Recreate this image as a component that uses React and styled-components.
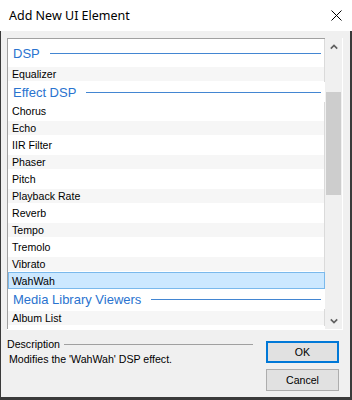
import React from "react";
import styled, { createGlobalStyle } from "styled-components";

const Global = createGlobalStyle`
  html, body { margin: 0; padding: 0; background: #ffffff; }
  * { box-sizing: border-box; }
`;

const UI_FONT = `"Liberation Sans", Arial, sans-serif`;

const Window = styled.div`
  width: 352px;
  height: 400px;
  display: flex;
  flex-direction: column;
  font-family: ${UI_FONT};
  color: #000;
  overflow: hidden;
`;

const TitleBar = styled.div`
  height: 31px;
  flex: none;
  background: #ffffff;
  display: flex;
  align-items: center;
  justify-content: space-between;
  padding: 0 10px 0 9px;
`;

const Title = styled.span`
  font-family: "Noto Sans", "Liberation Sans", sans-serif;
  font-size: 12.5px;
  line-height: 17px;
  color: #000;
`;

const CloseIcon = styled.svg`
  display: block;
  width: 11px;
  height: 11px;
`;

const Body = styled.div`
  flex: 1;
  background: #f0f0f0;
  border-left: 1px solid #3a3a3a;
  border-right: 2px solid #3a3a3a;
  border-bottom: 3px solid #3a3a3a;
  padding: 7px 7px 0 6px;
  display: flex;
  flex-direction: column;
`;

const ListBox = styled.div`
  height: 292px;
  flex: none;
  display: flex;
  border-right: 1px solid #ffffff;
  border-bottom: 1px solid #ffffff;
`;

const ListContent = styled.div`
  flex: 1;
  background: #ffffff;
  border-top: 1px solid #a0a0a0;
  border-left: 1px solid #a0a0a0;
  overflow: hidden;
`;

const Header = styled.div`
  height: ${(p) => (p.$first ? 26 : 20)}px;
  padding: ${(p) => (p.$first ? "3px" : "0")} 3px 0 5px;
  display: flex;
  align-items: center;
  gap: 10px;
  border-right: 1px solid ${(p) => (p.$first ? "#dadada" : "transparent")};
`;

const HeaderText = styled.span`
  font-size: 13px;
  line-height: 17px;
  color: #2a73cf;
  white-space: nowrap;
`;

const HeaderLine = styled.div`
  flex: 1;
  height: 1px;
  background: #4386d2;
`;

const Row = styled.div`
  height: 17px;
  padding: ${(p) => (p.$selected ? "1px 0 0 0" : "2px 0 1px 0")};
  border: ${(p) => (p.$selected ? "1px solid #7ab9ec" : "none")};
  border-right: 1px solid ${(p) => (p.$selected ? "#7ab9ec" : "#dadada")};
  background: ${(p) => (p.$selected ? "#cce8ff" : "#ffffff")};
`;

const RowBand = styled.div`
  height: 14px;
  padding-left: ${(p) => (p.$selected ? 3 : 4)}px;
  background: ${(p) => (p.$shaded ? "#f6f6f6" : "transparent")};
  font-size: 10.6px;
  line-height: 14px;
  white-space: nowrap;
`;

const Scrollbar = styled.div`
  width: 17px;
  flex: none;
  background: #f0f0f0;
  display: flex;
  flex-direction: column;
  padding: 0 1px;
`;

const ScrollButton = styled.div`
  height: 17px;
  flex: none;
  display: flex;
  align-items: center;
  justify-content: center;
`;

const Track = styled.div`
  flex: 1;
`;

const Thumb = styled.div`
  margin-top: 37px;
  height: 103px;
  background: #cdcdcd;
`;

const Footer = styled.div`
  display: flex;
  padding-top: 7px;
  gap: 13px;
`;

const DescColumn = styled.div`
  flex: 1;
  display: flex;
  flex-direction: column;
`;

const DescHeader = styled.div`
  height: 15px;
  display: flex;
  align-items: center;
  gap: 4px;
`;

const DescLabel = styled.span`
  font-size: 10.6px;
  line-height: 15px;
`;

const DescLine = styled.div`
  flex: 1;
  height: 1px;
  background: #a0a0a0;
`;

const DescText = styled.div`
  padding-left: 2px;
  font-size: 10.6px;
  line-height: 14px;
  white-space: nowrap;
`;

const ButtonColumn = styled.div`
  width: 73px;
  margin-top: 4px;
  margin-right: 4px;
  display: flex;
  flex-direction: column;
  gap: 6px;
`;

const Button = styled.div`
  height: 22px;
  background: #e1e1e1;
  border: ${(p) => (p.$default ? "2px solid #0078d7" : "1px solid #adadad")};
  display: flex;
  align-items: center;
  justify-content: center;
  font-size: 10.6px;
  line-height: 14px;
`;

const Arrow = ({ down }) => (
  <svg width="8" height="6" viewBox="0 0 8 6">
    <path
      d={down ? "M0.8 1.3 L4 4.5 L7.2 1.3" : "M0.8 4.7 L4 1.5 L7.2 4.7"}
      fill="none"
      stroke="#606060"
      strokeWidth="1.7"
    />
  </svg>
);

const groups = [
  { title: "DSP", items: ["Equalizer"] },
  {
    title: "Effect DSP",
    items: [
      "Chorus",
      "Echo",
      "IIR Filter",
      "Phaser",
      "Pitch",
      "Playback Rate",
      "Reverb",
      "Tempo",
      "Tremolo",
      "Vibrato",
      "WahWah",
    ],
  },
  {
    title: "Media Library Viewers",
    items: ["Album List"],
  },
];

const SELECTED = "WahWah";

export default function App() {
  let index = 0;
  return (
    <>
      <Global />
      <Window>
        <TitleBar>
          <Title>Add New UI Element</Title>
          <CloseIcon viewBox="0 0 11 11">
            <path d="M0.5 0.5 L10.5 10.5 M10.5 0.5 L0.5 10.5" stroke="#000" strokeWidth="1" fill="none" />
          </CloseIcon>
        </TitleBar>
        <Body>
          <ListBox>
            <ListContent>
              {groups.map((g, gi) => (
                <React.Fragment key={g.title}>
                  <Header $first={gi === 0}>
                    <HeaderText>{g.title}</HeaderText>
                    <HeaderLine />
                  </Header>
                  {g.items.map((it) => {
                    const i = index++;
                    const sel = it === SELECTED;
                    return (
                      <Row key={it} $selected={sel}>
                        <RowBand $shaded={!sel && i % 2 === 0} $selected={sel}>
                          {it}
                        </RowBand>
                      </Row>
                    );
                  })}
                </React.Fragment>
              ))}
            </ListContent>
            <Scrollbar>
              <ScrollButton>
                <Arrow />
              </ScrollButton>
              <Track>
                <Thumb />
              </Track>
              <ScrollButton>
                <Arrow down />
              </ScrollButton>
            </Scrollbar>
          </ListBox>
          <Footer>
            <DescColumn>
              <DescHeader>
                <DescLabel>Description</DescLabel>
                <DescLine />
              </DescHeader>
              <DescText>Modifies the 'WahWah' DSP effect.</DescText>
            </DescColumn>
            <ButtonColumn>
              <Button $default>OK</Button>
              <Button>Cancel</Button>
            </ButtonColumn>
          </Footer>
        </Body>
      </Window>
    </>
  );
}
